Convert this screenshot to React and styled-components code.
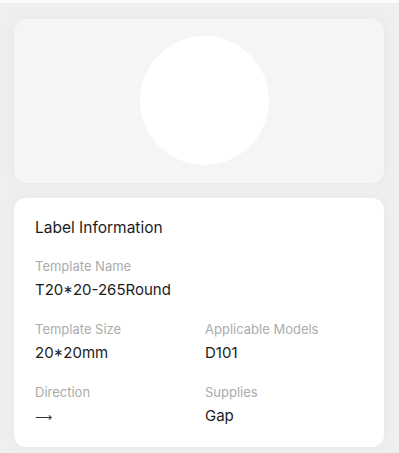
import React from 'react'
import styled, { createGlobalStyle } from 'styled-components'

const GlobalStyle = createGlobalStyle`
  body {
    margin: 0;
    background: #efefef;
    font-family: Inter, "Noto Sans", sans-serif;
  }
`;

const Page = styled.div`
  border-top: 3px solid #fbfbfb;
  padding: 16px 15px 9px 14px;
  display: flex;
  flex-direction: column;
  gap: 15px;
`;

const Preview = styled.div`
  height: 164px;
  background: #f5f5f5;
  border-radius: 12px;
  box-shadow: 0 0 14px rgba(0, 0, 0, 0.035);
  display: flex;
  align-items: center;
  justify-content: center;
`;

const Circle = styled.div`
  width: 129px;
  height: 129px;
  border-radius: 50%;
  background: #ffffff;
  margin-left: 10px;
  margin-top: -2px;
`;

const Card = styled.div`
  background: #ffffff;
  border-radius: 12px;
  padding: 20px 21px 19px 21px;
  box-shadow: 0 0 14px rgba(0, 0, 0, 0.035);
`;

const Title = styled.div`
  font-size: 15.5px;
  line-height: 20px;
  color: #1c1c1c;
  margin-bottom: 18px;
`;

const Grid = styled.div`
  display: grid;
  grid-template-columns: 170px 1fr;
  row-gap: 18px;
`;

const Field = styled.div`
  display: flex;
  flex-direction: column;
  gap: 3px;
  grid-column: ${p => (p.$wide ? '1 / -1' : 'auto')};
`;

const Label = styled.div`
  font-size: 13px;
  line-height: 20px;
  color: #ababab;
`;

const Value = styled.div`
  font-size: 15px;
  line-height: 22px;
  color: #1c1c1c;
`;

const Arrow = styled.span`
  font-family: "DejaVu Sans", sans-serif;
  font-size: 12px;
  font-weight: 300;
  color: #333;
`;

const fields = [
  { label: 'Template Name', value: 'T20*20-265Round', wide: true },
  { label: 'Template Size', value: '20*20mm' },
  { label: 'Applicable Models', value: 'D101' },
  { label: 'Direction', value: <Arrow>⟶</Arrow> },
  { label: 'Supplies', value: 'Gap' },
];

const App = () => {
  return (
    <>
      <GlobalStyle />
      <Page>
        <Preview>
          <Circle />
        </Preview>
        <Card>
          <Title>Label Information</Title>
          <Grid>
            {fields.map(f => (
              <Field key={f.label} $wide={f.wide}>
                <Label>{f.label}</Label>
                <Value>{f.value}</Value>
              </Field>
            ))}
          </Grid>
        </Card>
      </Page>
    </>
  )
}

export default App
